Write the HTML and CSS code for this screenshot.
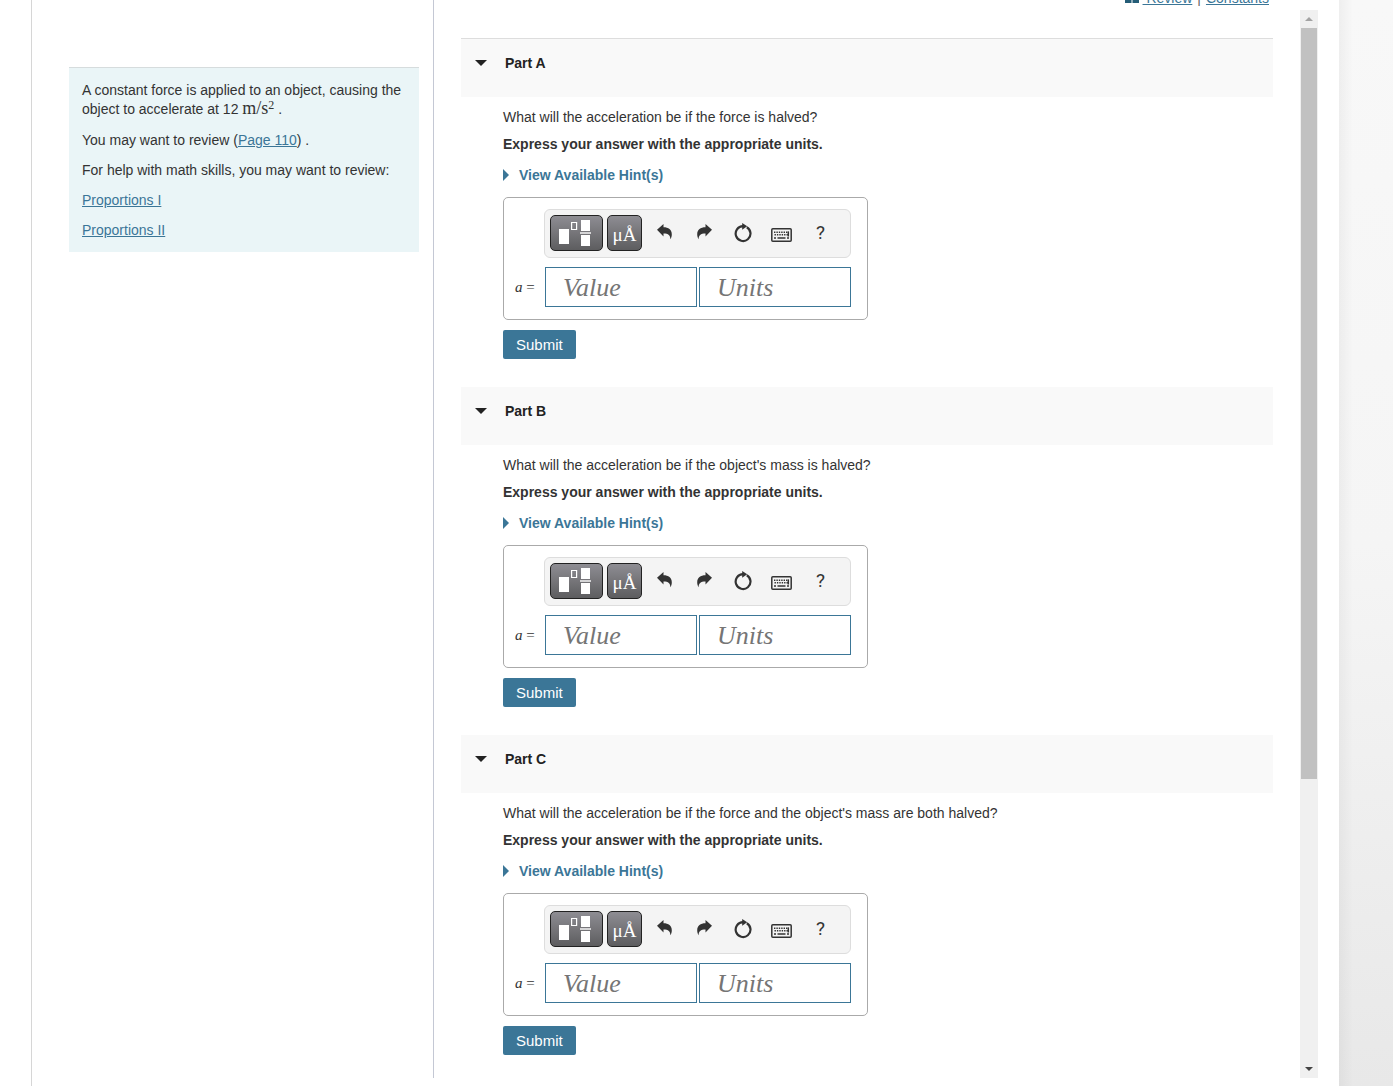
FILE: index.html
```
<!DOCTYPE html>
<html lang="en">
<head>
<meta charset="utf-8">
<title>Force and acceleration</title>
<link rel="stylesheet" href="styles.css">
</head>
<body>
<svg class="sprite" aria-hidden="true">
  <symbol id="i-template" viewBox="0 0 53 36">
    <path d="M8 13h10v15H8zM30 4h9v11h-9zM30 19h9v11h-9z" fill="#fff"/>
    <path d="M29 16.300h11v1.400H29z" fill="#fff"/>
    <path d="M20.600 6.500h5v7h-5z" fill="none" stroke="#fff" stroke-width="1.200"/>
  </symbol>
  <symbol id="i-undo" viewBox="0 0 16 17"><path d="M0 5.700L6.500 0v3.300c5 0 8.300 2.600 8.300 6.900 0 2-.5 3.600-1.500 5 .1-3.800-1.800-5.700-6.800-5.700v3z" fill="#333"/></symbol>
  <symbol id="i-redo" viewBox="0 0 16 17"><path d="M16 5.700L9.500 0v3.300c-5 0-8.300 2.600-8.300 6.900 0 2 .5 3.600 1.500 5-.1-3.800 1.800-5.700 6.800-5.700v3z" fill="#333"/></symbol>
  <symbol id="i-reset" viewBox="0 0 18 20"><path d="M12.800 4.200A7.400 7.400 0 1 1 9 3.200" fill="none" stroke="#333" stroke-width="2.200"/><path d="M8.200 0l5 3.200-5 3.600z" fill="#333"/></symbol>
  <symbol id="i-keys" viewBox="0 0 21 14"><rect x=".8" y=".8" width="19.400" height="12.400" rx="1" fill="none" stroke="#333" stroke-width="1.500"/><path d="M3 4.200h15M3.500 6.800h14" stroke="#333" stroke-width="1.500" stroke-dasharray="1.400 1"/><path d="M3 10h2M6.500 10h8M16 10h2M17.300 3.500v5" stroke="#333" stroke-width="1.500"/></symbol>
</svg>
<div class="page">
  <aside class="intro">
    <div class="problem">
      <p class="given">A constant force is applied to an object, causing the object to accelerate at 12 <span class="math">m/s<sup>2</sup></span> .</p>
      <p>You may want to review (<a href="#page110">Page 110</a>) .</p>
      <p>For help with math skills, you may want to review:</p>
      <p><a href="#p1">Proportions I</a></p>
      <p><a href="#p2">Proportions II</a></p>
    </div>
  </aside>
  <main class="parts">
    <nav class="tools"><svg class="book" viewBox="0 0 14 12" aria-hidden="true"><path d="M0 1h6.500v11H0zM7.500 1H14v11H7.500z" fill="#255d77"/></svg><a href="#review">&nbsp;Review</a><span class="bar">|</span><a href="#constants">Constants</a></nav>

    <section class="part first">
      <h2><button class="toggle" type="button">Part A</button></h2>
      <div class="body">
        <p>What will the acceleration be if the force is halved?</p>
        <p class="express">Express your answer with the appropriate units.</p>
        <a class="hint" href="#hintA">View Available Hint(s)</a>
        <div class="answer">
          <div class="toolbar">
            <button class="dark wide" type="button" aria-label="Templates"><svg width="53" height="36"><use href="#i-template"/></svg></button>
            <button class="dark unit" type="button">μÅ</button>
            <button class="plain" type="button" aria-label="Undo"><svg width="16" height="17"><use href="#i-undo"/></svg></button>
            <button class="plain" type="button" aria-label="Redo"><svg width="16" height="17"><use href="#i-redo"/></svg></button>
            <button class="plain" type="button" aria-label="Reset"><svg width="18" height="20"><use href="#i-reset"/></svg></button>
            <button class="plain low" type="button" aria-label="Keyboard"><svg width="21" height="14"><use href="#i-keys"/></svg></button>
            <button class="plain" type="button">?</button>
          </div>
          <label for="va"><i>a</i> =</label>
          <div class="fields"><input id="va" placeholder="Value"><input aria-label="Units" placeholder="Units"></div>
        </div>
        <button class="submit" type="button">Submit</button>
      </div>
    </section>

    <section class="part">
      <h2><button class="toggle" type="button">Part B</button></h2>
      <div class="body">
        <p>What will the acceleration be if the object's mass is halved?</p>
        <p class="express">Express your answer with the appropriate units.</p>
        <a class="hint" href="#hintB">View Available Hint(s)</a>
        <div class="answer">
          <div class="toolbar">
            <button class="dark wide" type="button" aria-label="Templates"><svg width="53" height="36"><use href="#i-template"/></svg></button>
            <button class="dark unit" type="button">μÅ</button>
            <button class="plain" type="button" aria-label="Undo"><svg width="16" height="17"><use href="#i-undo"/></svg></button>
            <button class="plain" type="button" aria-label="Redo"><svg width="16" height="17"><use href="#i-redo"/></svg></button>
            <button class="plain" type="button" aria-label="Reset"><svg width="18" height="20"><use href="#i-reset"/></svg></button>
            <button class="plain low" type="button" aria-label="Keyboard"><svg width="21" height="14"><use href="#i-keys"/></svg></button>
            <button class="plain" type="button">?</button>
          </div>
          <label for="vb"><i>a</i> =</label>
          <div class="fields"><input id="vb" placeholder="Value"><input aria-label="Units" placeholder="Units"></div>
        </div>
        <button class="submit" type="button">Submit</button>
      </div>
    </section>

    <section class="part">
      <h2><button class="toggle" type="button">Part C</button></h2>
      <div class="body">
        <p>What will the acceleration be if the force and the object's mass are both halved?</p>
        <p class="express">Express your answer with the appropriate units.</p>
        <a class="hint" href="#hintC">View Available Hint(s)</a>
        <div class="answer">
          <div class="toolbar">
            <button class="dark wide" type="button" aria-label="Templates"><svg width="53" height="36"><use href="#i-template"/></svg></button>
            <button class="dark unit" type="button">μÅ</button>
            <button class="plain" type="button" aria-label="Undo"><svg width="16" height="17"><use href="#i-undo"/></svg></button>
            <button class="plain" type="button" aria-label="Redo"><svg width="16" height="17"><use href="#i-redo"/></svg></button>
            <button class="plain" type="button" aria-label="Reset"><svg width="18" height="20"><use href="#i-reset"/></svg></button>
            <button class="plain low" type="button" aria-label="Keyboard"><svg width="21" height="14"><use href="#i-keys"/></svg></button>
            <button class="plain" type="button">?</button>
          </div>
          <label for="vc"><i>a</i> =</label>
          <div class="fields"><input id="vc" placeholder="Value"><input aria-label="Units" placeholder="Units"></div>
        </div>
        <button class="submit" type="button">Submit</button>
      </div>
    </section>
  </main>
  <div class="scroll" aria-hidden="true">
    <span class="arrow up"></span>
    <span class="thumb"></span>
    <span class="track"></span>
    <span class="arrow down"></span>
  </div>
  <div class="gutter"></div>
</div>
</body>
</html>
```
FILE: styles.css
```
* { box-sizing: border-box; }
body {
  margin: 0;
  background: #fff;
  color: #333;
  font: 14px/18px "Liberation Sans", Arial, sans-serif;
}
p { margin: 0; }
a { color: #3b7697; }
button, input { font: inherit; margin: 0; }
svg { display: block; }
.sprite { display: none; }

.page {
  display: flex;
  min-height: 100vh;
  margin-left: 31px;
  border-left: 1px solid #d6d6d6;
}

/* problem statement */
.intro {
  flex: 0 0 402px;
  margin-bottom: 8px;
  padding: 67px 14px 0 37px;
  border-right: 1px solid #c4c8d4;
}
.problem {
  display: flex;
  flex-direction: column;
  gap: 12px;
  padding: 13px 13px;
  border-top: 1px solid #d6dcdd;
  background: #eaf5f7;
}
.given { padding-bottom: 1px; }
.math { font: 18px/18px "Liberation Serif", serif; }
.math sup { font-size: 12px; line-height: 12px; vertical-align: 5px; }

/* question parts */
.parts { flex: 1; min-width: 0; padding: 0 27px; }
.tools {
  display: flex;
  align-items: flex-end;
  justify-content: flex-end;
  height: 7px;
  margin-bottom: 31px;
  padding-right: 4px;
  overflow: hidden;
}
.book { width: 14px; height: 12px; margin: 0 4px 4px 0; }
.bar { margin: 0 5px; color: #666; }
.part.first { border-top: 1px solid #ddd; }
.part h2 { margin: 0; padding: 14px 14px 24px; background: #f9f9f9; }
.toggle {
  display: flex;
  align-items: center;
  gap: 18px;
  padding: 0;
  border: 0;
  background: none;
  color: #222;
  font-size: 14px;
  font-weight: bold;
  line-height: 20px;
}
.toggle::before {
  content: "";
  border: 6px solid transparent;
  border-top-color: #222;
  border-bottom: 0;
}
.body {
  display: flex;
  flex-direction: column;
  align-items: flex-start;
  padding: 11px 0 28px 42px;
}
.express { margin-top: 9px; font-weight: bold; }
.hint {
  display: flex;
  align-items: center;
  gap: 10px;
  margin: 13px 0;
  font-weight: bold;
  text-decoration: none;
}
.hint::before {
  content: "";
  border: 6px solid transparent;
  border-left-color: #3b7697;
  border-right: 0;
}

/* answer box */
.answer {
  display: grid;
  grid-template-columns: 40px auto;
  row-gap: 9px;
  align-items: center;
  padding: 11px 16px 12px 0;
  border: 1px solid #aaa;
  border-radius: 5px;
}
.toolbar {
  grid-column: 2;
  display: flex;
  align-items: center;
  height: 49px;
  padding: 0 10px 2px 5px;
  border: 1px solid #ddd;
  border-radius: 6px;
  background: #f4f4f4;
}
.toolbar button { display: grid; place-items: center; padding: 0; }
.dark {
  height: 36px;
  margin-right: 4px;
  border: 1px solid #222;
  border-radius: 5px;
  background: linear-gradient(#8e8d93, #5d5d5f);
  color: #fff;
}
.wide { width: 53px; }
.toolbar .unit {
  width: 35px;
  margin-right: 3px;
  padding-top: 5px;
  font: 19px/20px "Liberation Serif", serif;
}
.plain {
  width: 39px;
  height: 36px;
  border: 0;
  background: none;
  color: #333;
}
.toolbar .plain { font: 19px/20px Roboto, sans-serif; }
.toolbar .low { padding-top: 5px; }
label { padding-left: 11px; font: 15px/18px "Liberation Serif", serif; }
.fields { display: flex; gap: 2px; padding-left: 1px; }
.fields input {
  width: 152px;
  height: 40px;
  padding: 2px 17px 0;
  border: 1px solid #3b7697;
  background: #fff;
  font: italic 26px/30px "Liberation Serif", serif;
}
.fields input::placeholder { color: #757575; opacity: 1; }
.submit {
  height: 29px;
  margin-top: 10px;
  padding: 0 13px;
  border: 0;
  border-radius: 2px;
  background: #3b7697;
  color: #fff;
  font-size: 15px;
}

/* scroll bar and page edge */
.scroll {
  display: flex;
  flex-direction: column;
  flex: 0 0 18px;
  margin: 10px 21px 8px 0;
  background: #f0f0f0;
}
.arrow { display: grid; place-items: center; height: 18px; }
.arrow::before { content: ""; border: 4px solid transparent; }
.up::before { border-bottom-color: #a3a3a3; border-top: 0; }
.down::before { border-top-color: #444; border-bottom: 0; }
.thumb { flex: 751; margin: 0 1px; background: #c1c1c1; }
.track { flex: 281; }
.gutter {
  flex: 0 0 54px;
  background:
    linear-gradient(90deg, rgba(0, 0, 0, .04), transparent 14px),
    linear-gradient(#f8f8f8, #f5f5f5 50%, #e8e8e8);
}
```
